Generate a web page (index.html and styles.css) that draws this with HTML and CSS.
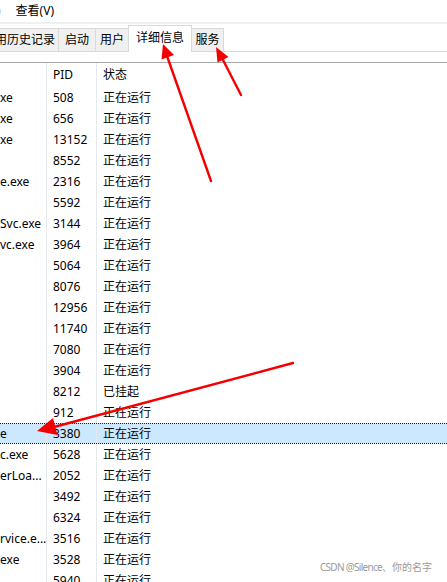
FILE: index.html
```html
<!DOCTYPE html>
<html lang="zh-CN">
<head>
  <meta charset="UTF-8">
  <title>任务管理器 - 详细信息</title>
  <link rel="stylesheet" href="styles.css">
</head>
<body>
  <div class="menubar">
    <span class="menu-cut">)</span>
    <span class="menu-item">查看(V)</span>
  </div>
  <div class="menu-line"></div>

  <div class="tabs">
    <div class="tab tab-first">用历史记录</div>
    <div class="tab tab-w37">启动</div>
    <div class="tab tab-w33">用户</div>
    <div class="tab active">详细信息</div>
    <div class="tab tab-w32">服务</div>
  </div>

  <div class="list">
    <div class="row head">
      <div class="c name"></div>
      <div class="c pid">PID</div>
      <div class="c state">状态</div>
    </div>
    <div id="rows"></div>
  </div>

  <div class="watermark"><span class="wm-latin">CSDN @Silence</span>、你的名字</div>

  <!-- red annotation arrows -->
  <svg class="arrows" width="447" height="582" viewBox="0 0 447 582">
    <g stroke="#f50000" stroke-width="2.4" fill="none" stroke-linecap="round">
      <line x1="211" y1="181" x2="167" y2="56"/>
      <line x1="241" y1="95" x2="222" y2="58"/>
      <line x1="293" y1="363" x2="54" y2="427"/>
    </g>
    <g fill="#f50000">
      <polygon points="163,44 161.5,59.5 174,55"/>
      <polygon points="216,47 217.5,62.5 228.5,57"/>
      <polygon points="37,431 57.5,435 53,418"/>
    </g>
  </svg>

  <script>
    const procs = [
      ["xe", "508", "正在运行"],
      ["xe", "656", "正在运行"],
      ["xe", "13152", "正在运行"],
      ["", "8552", "正在运行"],
      ["e.exe", "2316", "正在运行"],
      ["", "5592", "正在运行"],
      ["Svc.exe", "3144", "正在运行"],
      ["vc.exe", "3964", "正在运行"],
      ["", "5064", "正在运行"],
      ["", "8076", "正在运行"],
      ["", "12956", "正在运行"],
      ["", "11740", "正在运行"],
      ["", "7080", "正在运行"],
      ["", "3904", "正在运行"],
      ["", "8212", "已挂起"],
      ["", "912", "正在运行"],
      ["e", "3380", "正在运行", true],
      ["c.exe", "5628", "正在运行"],
      ["erLoa...", "2052", "正在运行"],
      ["", "3492", "正在运行"],
      ["", "6324", "正在运行"],
      ["rvice.e...", "3516", "正在运行"],
      ["exe", "3528", "正在运行"],
      ["", "5940", "正在运行"]
    ];

    const rowsBox = document.getElementById("rows");
    procs.forEach((p) => {
      const row = document.createElement("div");
      row.className = p[3] ? "row selected" : "row";
      row.innerHTML = `
        <div class="c name">${p[0]}</div>
        <div class="c pid">${p[1]}</div>
        <div class="c state">${p[2]}</div>
      `;
      rowsBox.appendChild(row);
    });
  </script>
</body>
</html>
```

FILE: styles.css
```css
* {
  margin: 0;
  padding: 0;
  box-sizing: border-box;
}

body {
  width: 447px;
  height: 582px;
  overflow: hidden;
  position: relative;
  background: #ffffff;
  color: #000000;
  font-family: "Noto Sans", "Noto Sans CJK SC", sans-serif;
  font-size: 12px;
  line-height: 16px;
}

/* Menu bar */
.menubar {
  height: 22px;
  display: flex;
  align-items: center;
  white-space: nowrap;
}

.menu-cut {
  margin-left: -3px;
  color: #7a2a60;
}

.menu-item {
  margin-left: 15px;
}

.menu-line {
  height: 2px;
  background: #f0f0f0;
}

/* Tabs */
.tabs {
  display: flex;
  align-items: flex-end;
  height: 28px;
  border-bottom: 1px solid #d9d9d9;
}

.tab {
  height: 23px;
  background: #f0f0f0;
  border-top: 1px solid #d9d9d9;
  border-right: 1px solid #d9d9d9;
  display: flex;
  align-items: center;
  justify-content: center;
  white-space: nowrap;
  flex-shrink: 0;
}

.tab-first {
  width: 59px;
  justify-content: flex-end;
  padding-right: 3px;
  overflow: hidden;
}

.tab-w37 { width: 37px; }
.tab-w33 { width: 33px; }
.tab-w32 { width: 32px; }

.tab.active {
  width: 64px;
  height: 27px;
  margin-bottom: -1px;
  margin-left: -1px;
  padding-bottom: 3px;
  background: #ffffff;
  border-left: 1px solid #d9d9d9;
}

/* Details list */
.list {
  margin-top: 10px;
  border-top: 1px solid #a8a8a8;
}

.row {
  display: grid;
  grid-template-columns: 47px 50px 1fr;
  height: 21px;
}

.row.head {
  height: 24px;
}

.c {
  display: flex;
  align-items: center;
  padding-left: 6px;
  border-right: 1px solid #e4e9f0;
  white-space: nowrap;
  overflow: hidden;
}

.c.name {
  padding-left: 0;
}

.c.state {
  border-right: none;
}

.row.selected {
  background: #cce8ff;
  border-top: 1px dotted #222222;
  border-bottom: 1px dotted #222222;
}

/* Watermark and annotations */
.watermark {
  position: absolute;
  right: 15px;
  bottom: 9px;
  font-size: 10px;
  line-height: 12px;
  color: #9a9a9a;
  white-space: nowrap;
}

.wm-latin {
  letter-spacing: -0.7px;
}

.arrows {
  position: absolute;
  top: 0;
  left: 0;
  pointer-events: none;
}
```
